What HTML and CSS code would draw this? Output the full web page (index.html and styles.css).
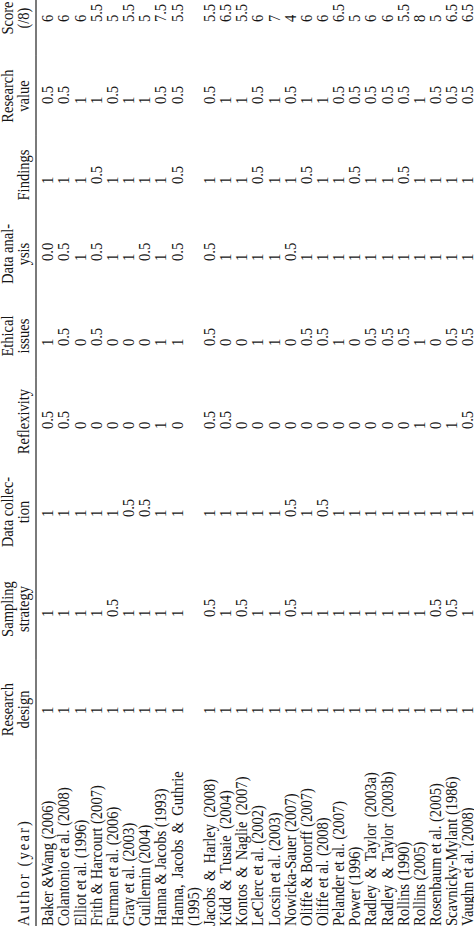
FILE: index.html
```html
<!DOCTYPE html>
<html>
<head>
<meta charset="utf-8">
<link rel="stylesheet" href="styles.css">
</head>
<body>
<div class="viewport">
  <div class="sheet">
    <table class="qa">
      <colgroup>
        <col class="c-author"><col class="c-rd"><col class="c-ss"><col class="c-dc"><col class="c-rf"><col class="c-ei"><col class="c-da"><col class="c-fi"><col class="c-rv"><col class="c-sc">
      </colgroup>
      <thead>
        <tr>
          <th class="h-author">Author (year)</th>
          <th>Research<br>design</th>
          <th>Sampling<br>strategy</th>
          <th>Data collec-<br>tion</th>
          <th>Reflexivity</th>
          <th>Ethical<br>issues</th>
          <th>Data anal-<br>ysis</th>
          <th>Findings</th>
          <th>Research<br>value</th>
          <th>Score<br>(/8)</th>
        </tr>
      </thead>
      <tbody>
        <tr class="first"><td class="author">Baker &amp;Wang (2006)</td><td>1</td><td>1</td><td>1</td><td>0.5</td><td>1</td><td>0.0</td><td>1</td><td>0.5</td><td>6</td></tr>
        <tr><td class="author">Colantonio et al. (2008)</td><td>1</td><td>1</td><td>1</td><td>0.5</td><td>0.5</td><td>0.5</td><td>1</td><td>0.5</td><td>6</td></tr>
        <tr><td class="author">Elliot et al. (1996)</td><td>1</td><td>1</td><td>1</td><td>0</td><td>0</td><td>1</td><td>1</td><td>1</td><td>6</td></tr>
        <tr><td class="author">Frith &amp; Harcourt (2007)</td><td>1</td><td>1</td><td>1</td><td>0</td><td>0.5</td><td>0.5</td><td>0.5</td><td>1</td><td>5.5</td></tr>
        <tr><td class="author">Furman et al. (2006)</td><td>1</td><td>0.5</td><td>1</td><td>0</td><td>0</td><td>1</td><td>1</td><td>0.5</td><td>5</td></tr>
        <tr><td class="author">Gray et al. (2003)</td><td>1</td><td>1</td><td>0.5</td><td>0</td><td>0</td><td>1</td><td>1</td><td>1</td><td>5.5</td></tr>
        <tr><td class="author">Guillemin (2004)</td><td>1</td><td>1</td><td>0.5</td><td>0</td><td>0</td><td>0.5</td><td>1</td><td>1</td><td>5</td></tr>
        <tr><td class="author">Hanna &amp; Jacobs (1993)</td><td>1</td><td>1</td><td>1</td><td>1</td><td>1</td><td>1</td><td>1</td><td>0.5</td><td>7.5</td></tr>
        <tr><td class="author wide">Hanna, Jacobs &amp; Guthrie (1995)</td><td>1</td><td>1</td><td>1</td><td>0</td><td>1</td><td>0.5</td><td>0.5</td><td>0.5</td><td>5.5</td></tr>
        <tr><td class="author wide">Jacobs &amp; Harley (2008)</td><td>1</td><td>0.5</td><td>1</td><td>0.5</td><td>0.5</td><td>0.5</td><td>1</td><td>0.5</td><td>5.5</td></tr>
        <tr><td class="author wide">Kidd &amp; Tusaie (2004)</td><td>1</td><td>1</td><td>1</td><td>0.5</td><td>0</td><td>1</td><td>1</td><td>1</td><td>6.5</td></tr>
        <tr><td class="author wide">Kontos &amp; Naglie (2007)</td><td>1</td><td>0.5</td><td>1</td><td>0</td><td>0</td><td>1</td><td>1</td><td>1</td><td>5.5</td></tr>
        <tr><td class="author">LeClerc et al. (2002)</td><td>1</td><td>1</td><td>1</td><td>0</td><td>1</td><td>1</td><td>0.5</td><td>0.5</td><td>6</td></tr>
        <tr><td class="author">Locsin et al. (2003)</td><td>1</td><td>1</td><td>1</td><td>0</td><td>1</td><td>1</td><td>1</td><td>1</td><td>7</td></tr>
        <tr><td class="author">Nowicka-Sauer (2007)</td><td>1</td><td>0.5</td><td>0.5</td><td>0</td><td>0</td><td>0.5</td><td>1</td><td>0.5</td><td>4</td></tr>
        <tr><td class="author">Oliffe &amp; Botorff (2007)</td><td>1</td><td>1</td><td>1</td><td>0</td><td>0.5</td><td>1</td><td>0.5</td><td>1</td><td>6</td></tr>
        <tr><td class="author">Oliffe et al. (2008)</td><td>1</td><td>1</td><td>0.5</td><td>0</td><td>0.5</td><td>1</td><td>1</td><td>1</td><td>6</td></tr>
        <tr><td class="author">Pelander et al. (2007)</td><td>1</td><td>1</td><td>1</td><td>0</td><td>1</td><td>1</td><td>1</td><td>0.5</td><td>6.5</td></tr>
        <tr><td class="author">Power (1996)</td><td>1</td><td>1</td><td>1</td><td>0</td><td>0</td><td>1</td><td>0.5</td><td>0.5</td><td>5</td></tr>
        <tr><td class="author wide">Radley &amp; Taylor (2003a)</td><td>1</td><td>1</td><td>1</td><td>0</td><td>0.5</td><td>1</td><td>1</td><td>0.5</td><td>6</td></tr>
        <tr><td class="author wide">Radley &amp; Taylor (2003b)</td><td>1</td><td>1</td><td>1</td><td>0</td><td>0.5</td><td>1</td><td>1</td><td>0.5</td><td>6</td></tr>
        <tr><td class="author">Rollins (1990)</td><td>1</td><td>1</td><td>1</td><td>0</td><td>0.5</td><td>1</td><td>0.5</td><td>0.5</td><td>5.5</td></tr>
        <tr><td class="author">Rollins (2005)</td><td>1</td><td>1</td><td>1</td><td>1</td><td>1</td><td>1</td><td>1</td><td>1</td><td>8</td></tr>
        <tr><td class="author">Rosenbaum et al. (2005)</td><td>1</td><td>0.5</td><td>1</td><td>0</td><td>0</td><td>1</td><td>1</td><td>0.5</td><td>5</td></tr>
        <tr><td class="author">Scavnicky-Mylant (1986)</td><td>1</td><td>0.5</td><td>1</td><td>1</td><td>0.5</td><td>1</td><td>1</td><td>0.5</td><td>6.5</td></tr>
        <tr><td class="author">Vaughn et al. (2008)</td><td>1</td><td>1</td><td>1</td><td>0.5</td><td>0.5</td><td>1</td><td>1</td><td>0.5</td><td>6.5</td></tr>
      </tbody>
    </table>
  </div>
</div>
</body>
</html>
```
FILE: styles.css
```css
html, body {
  margin: 0;
  padding: 0;
  background: #ffffff;
  overflow: hidden;
}

.viewport {
  width: 474px;
  height: 927px;
  overflow: hidden;
  background: #ffffff;
}

/* The table is laid out upright, then turned a quarter to the left
   and slightly narrowed along its rows, as in the scanned page. */
.sheet {
  width: 1053px;
  height: 474px;
  transform-origin: 0 0;
  transform: translateY(927px) rotate(-90deg) scaleX(0.88);
  font-family: "Liberation Serif", "Times New Roman", serif;
  font-size: 16.5px;
  line-height: 16.15px;
  color: #161616;
}

.qa {
  border-collapse: collapse;
  table-layout: fixed;
  width: 1075px;
  margin-top: -1px;
}

.c-author { width: 188.6px; }
.c-rd { width: 114.8px; }
.c-ss { width: 113.6px; }
.c-dc { width: 106.8px; }
.c-rf { width: 98.9px; }
.c-ei { width: 95.5px; }
.c-da { width: 90.9px; }
.c-fi { width: 88.6px; }
.c-rv { width: 90.9px; }
.c-sc { width: 86.4px; }

.qa th {
  font-weight: normal;
  text-align: center;
  vertical-align: bottom;
  padding: 0 0 2.5px 0;
  border-bottom: 2px solid #7a7a7a;
}

.qa th.h-author {
  text-align: left;
  letter-spacing: 2.4px;
}

.qa td {
  padding: 0;
  text-align: left;
  vertical-align: top;
  white-space: nowrap;
}

.qa td.author {
  white-space: normal;
}

/* scores start a fixed distance in from each column's edge */
.qa td:nth-child(2) { padding-left: 52.3px; }
.qa td:nth-child(3) { padding-left: 47.7px; }
.qa td:nth-child(4) { padding-left: 47.7px; }
.qa td:nth-child(5) { padding-left: 40.9px; }
.qa td:nth-child(6) { padding-left: 36.4px; }
.qa td:nth-child(7) { padding-left: 37.5px; }
.qa td:nth-child(8) { padding-left: 34.1px; }
.qa td:nth-child(9) { padding-left: 36.4px; }
.qa td:nth-child(10) { padding-left: 38.6px; }

.qa td.wide {
  word-spacing: 3px;
}

.qa tr.first td {
  padding-top: 3.5px;
}
```
